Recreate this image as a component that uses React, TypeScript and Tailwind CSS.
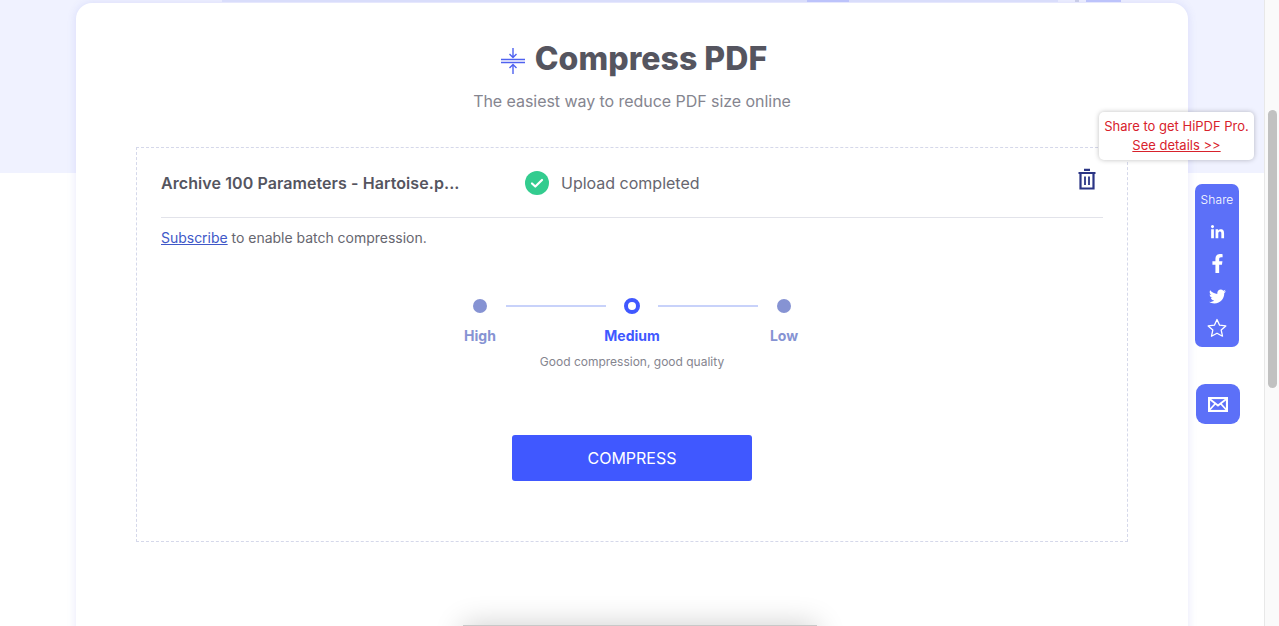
import { FaFacebookF, FaLinkedinIn, FaTwitter } from 'react-icons/fa';

function CompressIcon() {
  return (
    <svg className="mt-[3px] ml-px" width="26" height="28" viewBox="0 0 26 28" fill="none" stroke="#4f62f0" strokeWidth="1.4">
      <path d="M1 12.500h24M1 15.500h24" strokeWidth="1.500" />
      <path d="M13 1v9M9.500 7l3.500 3.500L16.500 7" />
      <path d="M13 27v-9M9.500 21l3.500-3.500 3.500 3.500" />
    </svg>
  );
}

function TrashIcon() {
  return (
    <svg width="18" height="22" viewBox="0 0 18 22" fill="none" stroke="#2b3585" strokeWidth="2.200">
      <path d="M0.500 5h17M6 1.800h6" />
      <path d="M2.500 5v15.500h13V5" />
      <path d="M7 8.500v8.500M11 8.500v8.500" strokeWidth="1.800" />
    </svg>
  );
}

function CheckBadge() {
  return (
    <span className="flex h-6 w-6 items-center justify-center rounded-full bg-[#33cc8f]">
      <svg width="16" height="16" viewBox="0 0 16 16" fill="none" stroke="#fff" strokeWidth="2.200" strokeLinecap="round" strokeLinejoin="round">
        <path d="M3 8.500l3.300 3L13 5" />
      </svg>
    </span>
  );
}

function StarIcon() {
  return (
    <svg width="20" height="19" viewBox="0 0 20 19" fill="none" stroke="#fff" strokeWidth="1.300" strokeLinejoin="round">
      <path d="M10 1.500l2.600 5.700 6.200.700-4.600 4.200 1.300 6.100L10 15.200l-5.500 3 1.300-6.100-4.600-4.200 6.200-.700z" />
    </svg>
  );
}

function MailIcon() {
  return (
    <svg width="20" height="15" viewBox="0 0 20 15" fill="none" stroke="#fff" strokeWidth="2.200">
      <rect x="1" y="1" width="18" height="13" />
      <path d="M1 1.500l9 7 9-7M1 13.500l6-6.500M19 13.500l-6-6.500" strokeWidth="1.800" />
    </svg>
  );
}

function Level({ label, active }: { label: string; active?: boolean }) {
  return (
    <div className="flex w-[50px] flex-col items-center">
      {active ? (
        <span className="h-4 w-4 rounded-full border-[4px] border-[#4058ff] bg-white" />
      ) : (
        <span className="my-px h-[14px] w-[14px] rounded-full bg-[#8693d3]" />
      )}
      <span className={`mt-[13px] text-sm leading-[17px] font-bold ${active ? 'text-[#4058ff]' : 'text-[#8693d3]'}`}>
        {label}
      </span>
    </div>
  );
}

export default function App() {
  return (
    <div className="flex h-[626px] overflow-hidden bg-white font-['Inter',sans-serif]">
      <main className="relative h-[626px] w-[1264px] overflow-hidden bg-[linear-gradient(#f0f2ff_173px,#ffffff_173px)]">
        <div className="flex h-[3px] pl-[222px]">
          <div className="h-[2px] w-[585px] bg-[#d9ddfb]" />
          <div className="h-[2px] w-[42px] bg-[#bcc3fb]" />
          <div className="h-[2px] w-[209px] bg-[#d9ddfb]" />
          <div className="ml-[17px] h-[2px] w-[4px] bg-[#c8cce8]" />
          <div className="ml-[7px] h-[2px] w-[35px] bg-[#bcc3fb]" />
        </div>

        <section className="mx-[76px] flex h-[800px] flex-col items-center rounded-t-[16px] bg-white px-[60px] pt-[36px] shadow-[0_0_10px_rgba(80,95,220,0.14)]">
          <div className="ml-[2px] flex h-10 items-center gap-[9px]">
            <CompressIcon />
            <h1 className="text-[32px] leading-10 font-extrabold tracking-[0.05px] text-[#55555f]">Compress PDF</h1>
          </div>
          <p className="mt-[11px] text-base leading-[22px] tracking-[-0.05px] text-[#85858f]">
            The easiest way to reduce PDF size online
          </p>

          <div className="mt-[35px] h-[395px] w-[992px] shrink-0 border border-dashed border-[#d5d8ea] bg-white px-6">
            <div className="flex h-[70px] border-b border-[#e2e3ea]">
              <div className="flex h-[69px] w-[364px] items-center">
                <span className="w-[310px] text-base font-semibold tracking-[0.08px] text-[#55555f]">Archive 100 Parameters - Hartoise.p...</span>
              </div>
              <div className="flex h-[69px] flex-1 items-center gap-3">
                <CheckBadge />
                <span className="text-base text-[#66666f]">Upload completed</span>
              </div>
              <div className="mt-[20px] mr-[7px]">
                <TrashIcon />
              </div>
            </div>

            <p className="mt-[10px] text-sm leading-5 tracking-[-0.02px] text-[#66666f]">
              <a className="text-[#4058c8] underline">Subscribe</a> to enable batch compression.
            </p>

            <div className="mt-[50px] flex flex-col items-center">
              <div className="flex items-start">
                <Level label="High" />
                <div className="mx-px mt-[7px] h-[2px] w-[100px] bg-[#c8d2fa]" />
                <Level label="Medium" active />
                <div className="mx-px mt-[7px] h-[2px] w-[100px] bg-[#c8d2fa]" />
                <Level label="Low" />
              </div>
              <p className="mt-[10px] text-xs leading-4 text-[#85858f]">Good compression, good quality</p>
            </div>

            <button className="mx-auto mt-[65px] block h-[46px] w-[240px] rounded-[3px] bg-[#4058ff] text-base text-white">
              COMPRESS
            </button>
          </div>

          <div className="mt-[83px] ml-4 h-10 w-[354px] shrink-0 border-t border-[#c8c8c8] bg-white shadow-[0_0_30px_rgba(0,0,0,0.2)]" />
        </section>

        <div className="absolute top-[112px] left-[1099px] flex h-12 w-[155px] flex-col items-center justify-center rounded-[5px] bg-white text-[13px] leading-[19px] text-[#d8222c] shadow-[0_0_5px_rgba(0,0,0,0.25)]">
          <span>Share to get HiPDF Pro.</span>
          <a className="underline">See details &gt;&gt;</a>
        </div>

        <div className="absolute top-[184px] left-[1195px] flex h-[163px] w-11 flex-col items-center rounded-[7px] bg-[#5c70f8] pt-[9px] text-white">
          <span className="text-xs leading-[14px] font-light tracking-[0.1px]">Share</span>
          <FaLinkedinIn className="mt-[18px] h-[15px] w-[15px]" />
          <FaFacebookF className="mt-[14px] h-[19px] w-[19px]" />
          <FaTwitter className="mt-[15px] h-[17px] w-[17px]" />
          <div className="mt-[13px]"><StarIcon /></div>
        </div>

        <div className="absolute top-[384px] left-[1196px] flex h-10 w-11 items-center justify-center rounded-[9px] bg-[#5c70f8]">
          <MailIcon />
        </div>
      </main>

      <aside className="h-[626px] w-[15px] border-l border-[#e8e8e8] bg-[#fafafa] pt-[110px] pl-[3px]">
        <div className="h-[278px] w-[9px] rounded-full bg-[#c1c1c1]" />
      </aside>
    </div>
  );
}
